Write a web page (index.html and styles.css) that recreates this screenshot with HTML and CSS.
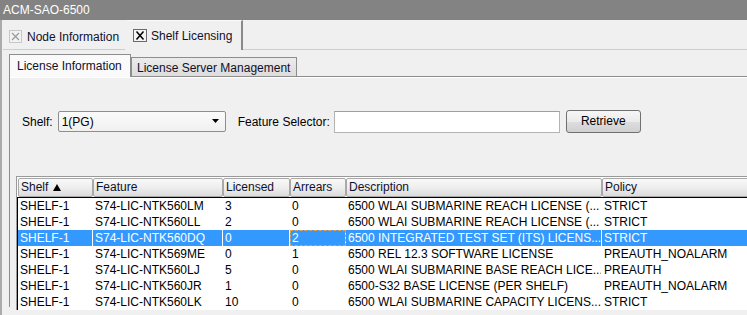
FILE: index.html
```html
<!DOCTYPE html>
<html>
<head>
<meta charset="utf-8">
<link rel="stylesheet" href="styles.css">
</head>
<body>
<div class="title">ACM-SAO-6500</div>
<div class="main">
  <div class="otabs">
    <div class="otab">
      <svg class="xicon" width="13" height="13" viewBox="0 0 13 13"><rect x="0.5" y="0.5" width="12" height="12" fill="#f2f2f2" stroke="#c8c8c8"/><path d="M3 3 L10 10 M10 3 L3 10" stroke="#9a9a9a" stroke-width="1.2"/></svg>
      <span>Node Information</span>
    </div>
    <div class="otab sel">
      <svg class="xicon" width="14" height="13" viewBox="0 0 14 13"><rect x="0.5" y="0.5" width="13" height="12" fill="#f4f4f4" stroke="#6a6a6a"/><path d="M3.5 2.5 L10.5 10.5 M10.5 2.5 L3.5 10.5" stroke="#000" stroke-width="1.5"/></svg>
      <span>Shelf Licensing</span>
    </div>
    <div class="ofill"></div>
  </div>
  <div class="inner">
    <div class="itabs">
      <div class="itab sel">License Information</div>
      <div class="itab">License Server Management</div>
      <div class="ifill"></div>
    </div>
    <div class="panel">
      <div class="form">
        <span class="lbl">Shelf:</span>
        <div class="combo"><span>1(PG)</span><svg width="8" height="5" viewBox="0 0 8 5"><path d="M0 0 H7 L3.5 4 Z" fill="#000"/></svg></div>
        <span class="lbl lbl2">Feature Selector:</span>
        <div class="input"></div>
        <div class="btn">Retrieve</div>
      </div>
      <div class="table">
        <div class="thead">
          <div class="th">Shelf <svg class="sort" width="8" height="7" viewBox="0 0 8 7"><path d="M4 0 L8 7 H0 Z" fill="#000"/></svg></div>
          <div class="th">Feature</div>
          <div class="th">Licensed</div>
          <div class="th">Arrears</div>
          <div class="th">Description</div>
          <div class="th">Policy</div>
        </div>
        <div class="tbody">
          <div class="tr"><div class="td">SHELF-1</div><div class="td">S74-LIC-NTK560LM</div><div class="td">3</div><div class="td">0</div><div class="td">6500 WLAI SUBMARINE REACH LICENSE (...</div><div class="td">STRICT</div></div>
          <div class="tr"><div class="td">SHELF-1</div><div class="td">S74-LIC-NTK560LL</div><div class="td">2</div><div class="td">0</div><div class="td">6500 WLAI SUBMARINE REACH LICENSE (...</div><div class="td">STRICT</div></div>
          <div class="tr sel"><div class="td">SHELF-1</div><div class="td">S74-LIC-NTK560DQ</div><div class="td">0</div><div class="td focus">2</div><div class="td">6500 INTEGRATED TEST SET (ITS) LICENS...</div><div class="td">STRICT</div></div>
          <div class="tr"><div class="td">SHELF-1</div><div class="td">S74-LIC-NTK569ME</div><div class="td">0</div><div class="td">1</div><div class="td">6500 REL 12.3 SOFTWARE LICENSE</div><div class="td">PREAUTH_NOALARM</div></div>
          <div class="tr"><div class="td">SHELF-1</div><div class="td">S74-LIC-NTK560LJ</div><div class="td">5</div><div class="td">0</div><div class="td">6500 WLAI SUBMARINE BASE REACH LICE...</div><div class="td">PREAUTH</div></div>
          <div class="tr"><div class="td">SHELF-1</div><div class="td">S74-LIC-NTK560JR</div><div class="td">1</div><div class="td">0</div><div class="td">6500-S32 BASE LICENSE (PER SHELF)</div><div class="td">PREAUTH_NOALARM</div></div>
          <div class="tr"><div class="td">SHELF-1</div><div class="td">S74-LIC-NTK560LK</div><div class="td">10</div><div class="td">0</div><div class="td">6500 WLAI SUBMARINE CAPACITY LICENS...</div><div class="td">STRICT</div></div>
        </div>
      </div>
    </div>
  </div>
</div>
</body>
</html>
```

FILE: styles.css
```css
html, body {
  margin: 0;
  padding: 0;
}
body {
  width: 747px;
  height: 315px;
  overflow: hidden;
  background: #f0f0f0;
  font-family: "Liberation Sans", Arial, sans-serif;
  font-size: 12px;
  color: #000;
}
.title {
  height: 20px;
  box-sizing: border-box;
  padding: 1px 0 0 3px;
  line-height: 19px;
  background: #838383;
  color: #fff;
}
.main {
  border-left: 2px solid #ababab;
  height: 295px;
  box-sizing: border-box;
}
.otabs {
  height: 30px;
  display: flex;
  align-items: flex-end;
  padding-left: 1px;
}
.otab {
  height: 29px;
  width: 122px;
  box-sizing: border-box;
  display: flex;
  align-items: center;
  padding: 3px 0 0 6px;
  border-bottom: 1px solid #cdcdcd;
  color: #10102a;
}
.otab .xicon {
  margin-right: 5px;
  flex: none;
}
.otab.sel {
  height: 30px;
  width: 116px;
  margin-left: 2px;
  padding: 0 0 0 6px;
  border-top: 1px solid #fafafa;
  border-right: 2px solid #8a8a8a;
  border-bottom: none;
}
.otab.sel .xicon {
  margin-right: 4px;
}
.ofill {
  flex: 1;
  height: 1px;
  border-bottom: 1px solid #cdcdcd;
}
.inner {
  padding-left: 7px;
}
.itabs {
  height: 27px;
  display: flex;
  align-items: flex-end;
}
.itab {
  box-sizing: border-box;
  height: 20px;
  width: 166px;
  padding: 2px 0 0 5px;
  line-height: 16px;
  border: 1px solid #8d8d8d;
  background: linear-gradient(#ececec, #dcdcdc);
  color: #10102a;
}
.itab.sel {
  height: 23px;
  width: 122px;
  padding: 3px 0 0 7px;
  border-bottom: none;
  background: #fafafa;
}
.ifill {
  flex: 1;
  border-bottom: 1px solid #8d8d8d;
}
.panel {
  border-left: 1px solid #8d8d8d;
  box-shadow: inset 0 1px #ffffff;
  height: 230px;
}
.form {
  display: flex;
  align-items: center;
  padding: 33px 0 0 12px;
  height: 23px;
}
.lbl {
  margin-right: 5px;
}
.lbl2 {
  margin-left: 12px;
  margin-right: 4px;
}
.combo {
  box-sizing: border-box;
  width: 168px;
  height: 21px;
  border: 1px solid #8e8e8e;
  border-radius: 2px;
  background: linear-gradient(#fbfbfb, #f0f0f0);
  display: flex;
  align-items: center;
  justify-content: space-between;
  padding: 0 5px 0 3px;
}
.input {
  box-sizing: border-box;
  width: 226px;
  height: 22px;
  background: #fff;
  border: 1px solid #b4b4b4;
  border-top-color: #a0a0a0;
}
.btn {
  box-sizing: border-box;
  margin-left: 6px;
  width: 75px;
  height: 23px;
  border: 1px solid #707070;
  border-radius: 3px;
  background: linear-gradient(#f6f6f6 0%, #ebebeb 50%, #dddddd 51%, #d0d0d0 100%);
  text-align: center;
  line-height: 21px;
}
.table {
  margin: 43px 0 0 6px;
  border-top: 1px solid #9a9a9a;
  border-left: 1px solid #9a9a9a;
}
.thead {
  display: grid;
  grid-template-columns: 75px 130px 67px 56px 256px 160px;
  padding: 1px 0 0 1px;
  border-bottom: 1px solid #000;
  background: #fdfdfd;
}
.th {
  box-sizing: border-box;
  height: 19px;
  line-height: 17px;
  padding-left: 2px;
  border: 1px solid #a9a9a9;
  border-radius: 2px;
  background: linear-gradient(#f9f9f9 0%, #eeeeee 50%, #dcdcdc 100%);
  white-space: nowrap;
  color: #10102a;
}
.sort {
  margin-left: 1px;
  vertical-align: 0;
}
.tbody {
  border-left: 1px solid #000;
  background: #fff;
}
.tr {
  display: grid;
  grid-template-columns: 75px 130px 67px 56px 256px 160px;
  height: 16px;
}
.td {
  box-sizing: border-box;
  height: 16px;
  line-height: 17px;
  padding-left: 2px;
  border-right: 1px solid #fff;
  white-space: nowrap;
  overflow: hidden;
}
.tr.sel .td {
  background: #3399ff;
  color: #fff;
}
.tr.sel .td.focus {
  outline: 1px dashed #e0a050;
  outline-offset: -1px;
}
```
